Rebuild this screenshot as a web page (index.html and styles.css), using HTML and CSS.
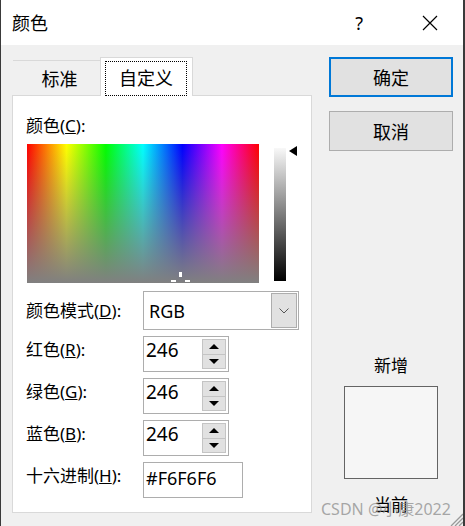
FILE: index.html
```html
<!DOCTYPE html>
<html>
<head>
  <meta charset="utf-8">
  <title>颜色</title>
  <link rel="stylesheet" href="styles.css">
</head>
<body>
  <div class="window">
    <div class="titlebar">
      <span class="title">颜色</span>
      <span class="help">?</span>
      <svg class="close" width="16" height="16" viewBox="0 0 16 16">
        <path d="M1 1 L15 15 M15 1 L1 15" stroke="#000" stroke-width="1.2" fill="none"/>
      </svg>
    </div>

    <div class="content">
      <div class="left">
        <div class="tabs">
          <div class="tab">标准</div>
          <div class="tab active"><span class="focus">自定义</span></div>
        </div>

        <div class="panel">
          <div class="label top-label">颜色(<u>C</u>):</div>

          <div class="picker">
            <div class="spectrum">
              <span class="cross cross-v"></span>
              <span class="cross cross-l"></span>
              <span class="cross cross-r"></span>
            </div>
            <div class="lum"></div>
            <svg class="lum-arrow" width="8" height="10" viewBox="0 0 8 10">
              <polygon points="0,5 8,0 8,10" fill="#000"/>
            </svg>
          </div>

          <div class="form">
            <div class="label combo-label">颜色模式(<u>D</u>):</div>
            <div class="combo">
              <span class="combo-text">RGB</span>
              <span class="combo-btn">
                <svg width="10" height="6" viewBox="0 0 10 6">
                  <path d="M0.5 0.5 L5 5 L9.5 0.5" stroke="#555" stroke-width="1" fill="none"/>
                </svg>
              </span>
            </div>

            <div class="label">红色(<u>R</u>):</div>
            <div class="spin">
              <span class="spin-text">246</span>
              <span class="spin-btns">
                <span class="spin-btn"><i class="tri up"></i></span>
                <span class="spin-btn"><i class="tri down"></i></span>
              </span>
            </div>

            <div class="label">绿色(<u>G</u>):</div>
            <div class="spin">
              <span class="spin-text">246</span>
              <span class="spin-btns">
                <span class="spin-btn"><i class="tri up"></i></span>
                <span class="spin-btn"><i class="tri down"></i></span>
              </span>
            </div>

            <div class="label">蓝色(<u>B</u>):</div>
            <div class="spin">
              <span class="spin-text">246</span>
              <span class="spin-btns">
                <span class="spin-btn"><i class="tri up"></i></span>
                <span class="spin-btn"><i class="tri down"></i></span>
              </span>
            </div>

            <div class="label">十六进制(<u>H</u>):</div>
            <div class="hex">#F6F6F6</div>
          </div>
        </div>
      </div>

      <div class="right">
        <button class="button default">确定</button>
        <button class="button">取消</button>
        <div class="preview-label new-label">新增</div>
        <div class="swatch"></div>
        <div class="preview-label">当前</div>
      </div>
    </div>

    <div class="watermark">CSDN @小康2022</div>
    <svg class="grip" width="14" height="14" viewBox="0 0 14 14">
      <path d="M14 2 L2 14 M14 6 L6 14 M14 10 L10 14" stroke="#999" stroke-width="1.3"/>
    </svg>
  </div>
</body>
</html>
```

FILE: styles.css
```css
body {
  margin: 0;
  font-family: "Noto Sans", "Noto Sans CJK SC", sans-serif;
  color: #000;
}

.window {
  position: relative;
  width: 465px;
  height: 526px;
  box-sizing: border-box;
  border-left: 1px solid #3a3a3a;
  border-right: 2px solid #3a3a3a;
  background-color: #f0f0f0;
  overflow: hidden;
}

/* title bar */

.titlebar {
  display: flex;
  align-items: center;
  height: 45px;
  background-color: #fff;
  padding-left: 11px;
}

.title {
  font-size: 18px;
  line-height: 24px;
  flex: 1;
}

.help {
  font-size: 18px;
  line-height: 24px;
  margin-right: 59px;
}

.close {
  margin-right: 25px;
}

/* main area */

.content {
  display: flex;
  padding: 12px 0 0 11px;
}

.left {
  width: 300px;
}

.tabs {
  display: flex;
  align-items: flex-end;
  height: 38px;
  padding-left: 1px;
}

.tab {
  width: 87px;
  height: 35px;
  border-top: 1px solid #d9d9d9;
  font-size: 18px;
  line-height: 36px;
  text-align: center;
  padding-left: 6px;
  box-sizing: border-box;
}

.tab.active {
  position: relative;
  z-index: 1;
  width: 93px;
  height: 39px;
  margin-bottom: -1px;
  padding: 3px 5px 2px 4px;
  background-color: #fff;
  border: 1px solid #d9d9d9;
  border-bottom: none;
}

.focus {
  display: block;
  height: 33px;
  line-height: 33px;
  border: 1px dotted #000;
}

.panel {
  height: 418px;
  box-sizing: border-box;
  background-color: #fff;
  border: 1px solid #d9d9d9;
  padding: 18px 0 0 13px;
}

.label {
  font-size: 17px;
  line-height: 28px;
  white-space: nowrap;
}

.top-label {
  line-height: 24px;
}

/* colour field and luminance bar */

.picker {
  display: flex;
  align-items: flex-start;
  margin-top: 6px;
  padding-left: 1px;
}

.spectrum {
  position: relative;
  width: 232px;
  height: 139px;
  background:
    linear-gradient(to bottom, rgba(128, 128, 128, 0), rgb(128, 128, 128)),
    linear-gradient(to right, #f00, #ff0 17%, #0f0 34%, #0ff 50%, #00f 67%, #f0f 84%, #f00);
}

.cross {
  position: absolute;
  background-color: #fff;
}

.cross-v {
  left: 152px;
  top: 128px;
  width: 3px;
  height: 5px;
}

.cross-l {
  left: 144px;
  top: 136px;
  width: 5px;
  height: 2px;
}

.cross-r {
  left: 158px;
  top: 136px;
  width: 5px;
  height: 2px;
}

.lum {
  width: 12px;
  height: 133px;
  margin: 4px 0 0 15px;
  background: linear-gradient(to bottom, #f8f8f8, #000);
}

.lum-arrow {
  margin: 2px 0 0 3px;
}

/* value rows */

.form {
  display: grid;
  grid-template-columns: 117px auto;
  grid-template-rows: 39px;
  grid-auto-rows: 36px;
  row-gap: 6px;
  margin-top: 8px;
}

.combo-label {
  line-height: 39px;
}

.combo {
  display: flex;
  width: 156px;
  box-sizing: border-box;
  border: 1px solid #adadad;
  padding: 1px 1px 1px 5px;
  font-size: 18px;
}

.combo-text {
  flex: 1;
  line-height: 36px;
}

.combo-btn {
  display: flex;
  align-items: center;
  justify-content: center;
  width: 26px;
  box-sizing: border-box;
  background-color: #e1e1e1;
  border: 1px solid #adadad;
}

.spin {
  display: flex;
  width: 86px;
  box-sizing: border-box;
  border: 1px solid #adadad;
  padding: 2px;
}

.spin-text {
  flex: 1;
  font-size: 19px;
  line-height: 23px;
}

.spin-btns {
  display: flex;
  flex-direction: column;
  width: 24px;
}

.spin-btn {
  flex: 1;
  display: flex;
  align-items: center;
  justify-content: center;
  background-color: #e1e1e1;
  border: 1px solid #c4c4c4;
}

.spin-btn + .spin-btn {
  border-top: none;
}

.tri {
  width: 0;
  height: 0;
  border-left: 5px solid transparent;
  border-right: 5px solid transparent;
}

.tri.up {
  border-bottom: 5px solid #000;
}

.tri.down {
  border-top: 5px solid #000;
}

.hex {
  width: 100px;
  box-sizing: border-box;
  border: 1px solid #adadad;
  padding-left: 2px;
  font-size: 18px;
  line-height: 30px;
}

/* buttons and preview */

.right {
  display: flex;
  flex-direction: column;
  align-items: center;
  width: 124px;
  margin-left: 17px;
}

.button {
  width: 124px;
  height: 40px;
  background-color: #e1e1e1;
  border: 1px solid #adadad;
  font-family: inherit;
  font-size: 18px;
  color: #000;
  padding: 0;
}

.button.default {
  border: 2px solid #0078d7;
}

.button + .button {
  margin-top: 14px;
}

.preview-label {
  font-size: 17px;
  line-height: 24px;
  margin-top: 14px;
}

.new-label {
  margin-top: 203px;
}

.swatch {
  width: 94px;
  height: 93px;
  box-sizing: border-box;
  margin-top: 8px;
  background-color: #f6f6f6;
  border: 1px solid #646464;
}

/* blog watermark laid over the corner */
.watermark {
  position: absolute;
  left: 320px;
  top: 497px;
  font-size: 16px;
  line-height: 24px;
  color: rgba(140, 140, 140, 0.75);
  white-space: nowrap;
}

.grip {
  position: absolute;
  right: 0;
  bottom: 0;
}
```
